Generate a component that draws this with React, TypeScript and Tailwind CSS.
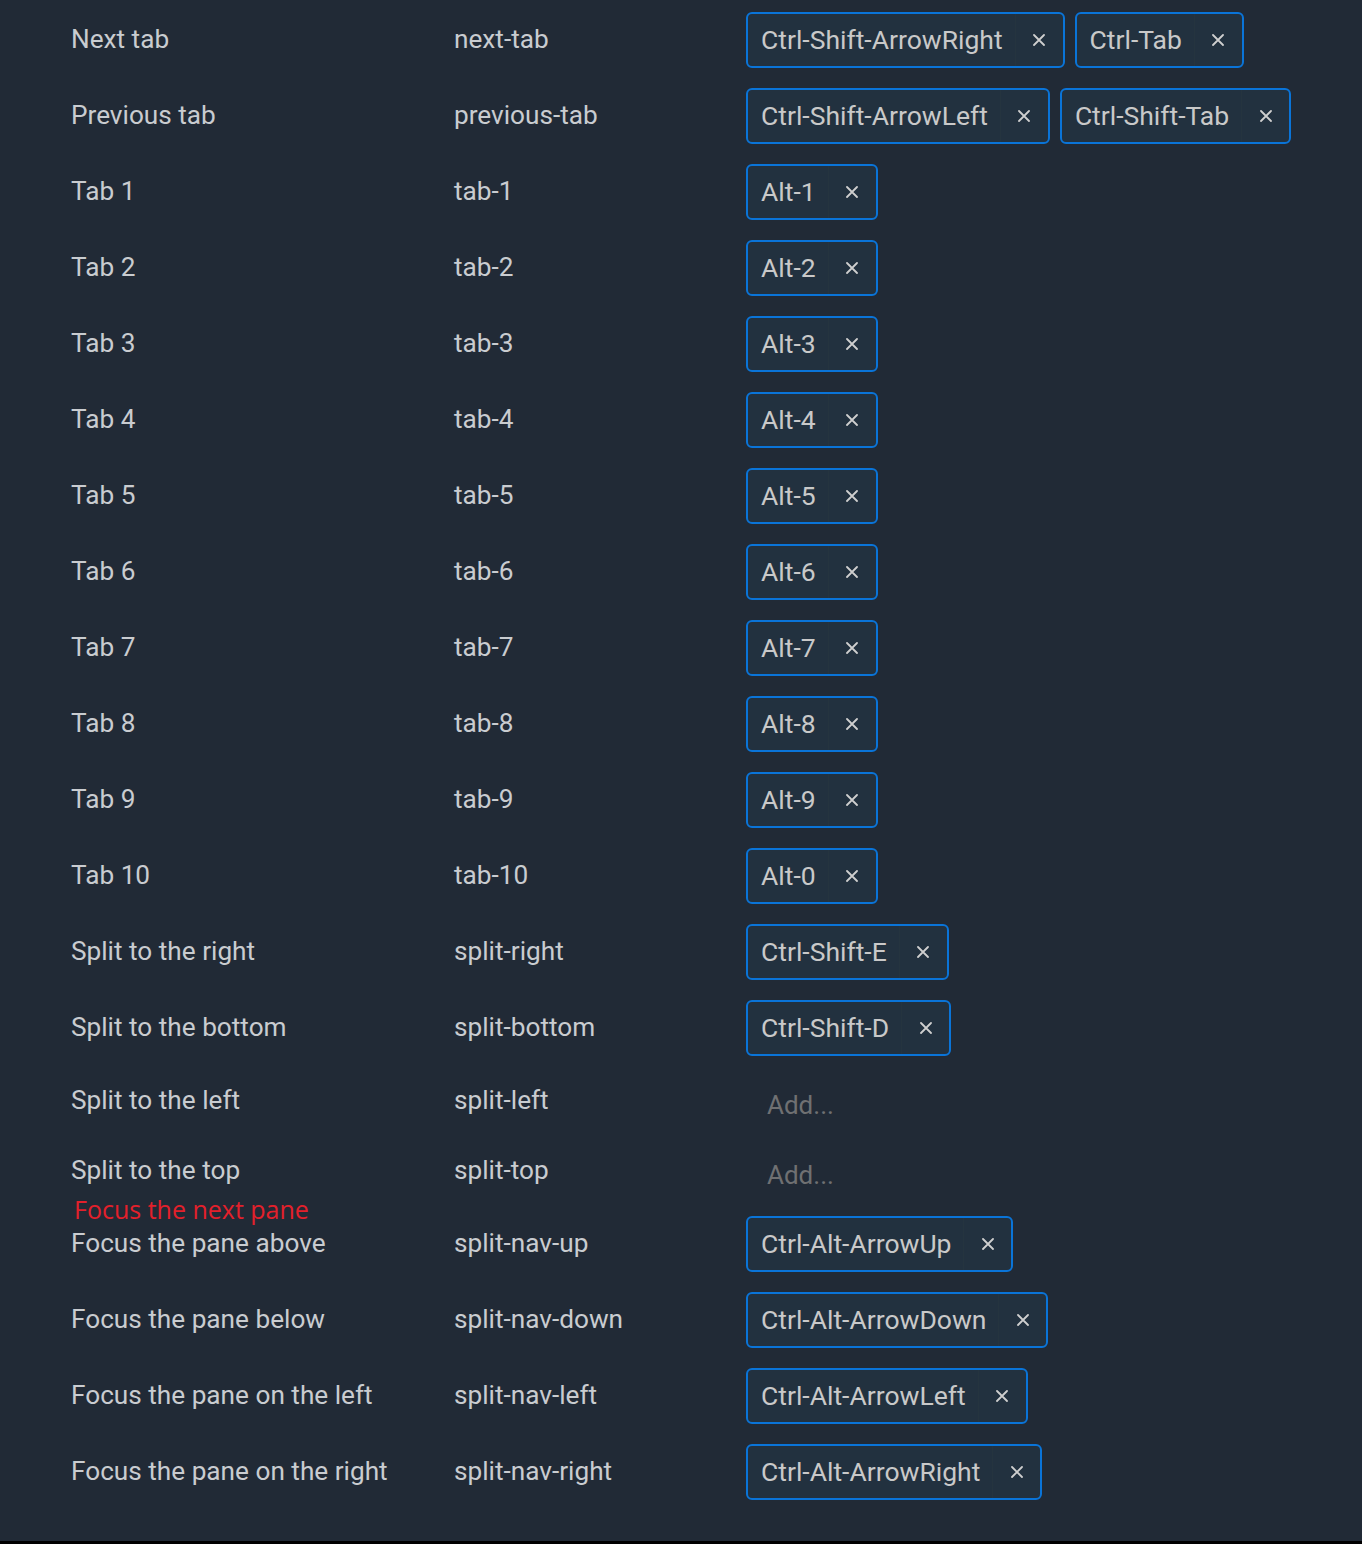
import React from "react";

type Row = { label: string; id: string; keys: string[] };

const rows: Row[] = [
  { label: "Next tab", id: "next-tab", keys: ["Ctrl-Shift-ArrowRight", "Ctrl-Tab"] },
  { label: "Previous tab", id: "previous-tab", keys: ["Ctrl-Shift-ArrowLeft", "Ctrl-Shift-Tab"] },
  { label: "Tab 1", id: "tab-1", keys: ["Alt-1"] },
  { label: "Tab 2", id: "tab-2", keys: ["Alt-2"] },
  { label: "Tab 3", id: "tab-3", keys: ["Alt-3"] },
  { label: "Tab 4", id: "tab-4", keys: ["Alt-4"] },
  { label: "Tab 5", id: "tab-5", keys: ["Alt-5"] },
  { label: "Tab 6", id: "tab-6", keys: ["Alt-6"] },
  { label: "Tab 7", id: "tab-7", keys: ["Alt-7"] },
  { label: "Tab 8", id: "tab-8", keys: ["Alt-8"] },
  { label: "Tab 9", id: "tab-9", keys: ["Alt-9"] },
  { label: "Tab 10", id: "tab-10", keys: ["Alt-0"] },
  { label: "Split to the right", id: "split-right", keys: ["Ctrl-Shift-E"] },
  { label: "Split to the bottom", id: "split-bottom", keys: ["Ctrl-Shift-D"] },
  { label: "Split to the left", id: "split-left", keys: [] },
  { label: "Split to the top", id: "split-top", keys: [] },
];

const navRows: Row[] = [
  { label: "Focus the pane above", id: "split-nav-up", keys: ["Ctrl-Alt-ArrowUp"] },
  { label: "Focus the pane below", id: "split-nav-down", keys: ["Ctrl-Alt-ArrowDown"] },
  { label: "Focus the pane on the left", id: "split-nav-left", keys: ["Ctrl-Alt-ArrowLeft"] },
  { label: "Focus the pane on the right", id: "split-nav-right", keys: ["Ctrl-Alt-ArrowRight"] },
];

const KeyChip = ({ combo }: { combo: string }) => (
  <div className="flex h-[56px] items-center rounded-[6px] border-2 border-[#0a74d8] bg-[#22313f]">
    <span className="pl-[13px] pr-[12px] text-[26.5px] leading-none text-[#c9c9c9]">{combo}</span>
    <button className="flex h-full w-[48px] items-center justify-center border-l border-[#25343f]">
      <svg width="12" height="12" viewBox="0 0 12 12" className="text-[#cfcfcf]">
        <path d="M1 1L11 11M11 1L1 11" stroke="currentColor" strokeWidth="1.8" strokeLinecap="round" />
      </svg>
    </button>
  </div>
);

const ShortcutRow = ({ row }: { row: Row }) => {
  const empty = row.keys.length === 0;
  return (
    <div className={empty ? "flex h-[70px] items-center" : "flex h-[76px] items-center"}>
      <div className="w-[383px] text-[26.2px] text-[#c9ccd0]">{row.label}</div>
      <div className="w-[292px] text-[26.2px] text-[#c9ccd0]">{row.id}</div>
      {empty ? (
        <div className="mt-2 pl-[21px] text-[26px] text-[#6f7072]">Add...</div>
      ) : (
        <div className="flex gap-[10px]">
          {row.keys.map((k) => (
            <KeyChip key={k} combo={k} />
          ))}
        </div>
      )}
    </div>
  );
};

export default function App() {
  return (
    <div className="min-h-screen bg-black font-['Roboto',sans-serif]">
      <div className="bg-[#212a36] pl-[71px] pt-[2px] pb-[31px]">
        {rows.map((r) => (
          <ShortcutRow key={r.id} row={r} />
        ))}
        <div className="-mt-[12px] h-[30px] pl-[3px] font-['Open_Sans',sans-serif] text-[25px] leading-[30px] text-[#e3202b]">
          Focus the next pane
        </div>
        <div className="-mt-[18px]">
          {navRows.map((r) => (
            <ShortcutRow key={r.id} row={r} />
          ))}
        </div>
      </div>
    </div>
  );
}
